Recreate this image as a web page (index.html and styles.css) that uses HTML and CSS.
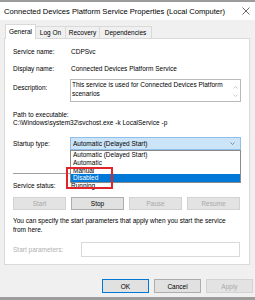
FILE: index.html
```html
<html>

<head>
    <link rel="stylesheet" href="styles.css">
</head>

<body>
    <div class="window">
        <div class="top-line"></div>
        <div class="title-bar">
            <span class="title">Connected Devices Platform Service Properties (Local Computer)</span>
            <svg class="close" width="8" height="8" viewBox="0 0 8 8">
                <path d="M0.5 0.5 L7.5 7.5 M7.5 0.5 L0.5 7.5" stroke="#444" stroke-width="0.8" fill="none" />
            </svg>
        </div>

        <div class="tabs">
            <div class="tab selected" style="width: 31px">General</div>
            <div class="tab" style="width: 31px">Log On</div>
            <div class="tab" style="width: 35px">Recovery</div>
            <div class="tab" style="width: 53px">Dependencies</div>
        </div>

        <div class="panel">
            <div class="row first">
                <div class="label">Service name:</div>
                <div class="value">CDPSvc</div>
            </div>
            <div class="row">
                <div class="label">Display name:</div>
                <div class="value">Connected Devices Platform Service</div>
            </div>
            <div class="row description">
                <div class="label">Description:</div>
                <div class="textarea">
                    <div class="textarea-text">This service is used for Connected Devices Platform<br>scenarios</div>
                    <div class="scroll">
                        <svg width="5" height="3" viewBox="0 0 5 3"><path d="M0.5 2.5 L2.5 0.5 L4.5 2.5" stroke="#b5b5b5" stroke-width="0.7" fill="none" /></svg>
                        <svg width="5" height="3" viewBox="0 0 5 3"><path d="M0.5 0.5 L2.5 2.5 L4.5 0.5" stroke="#b5b5b5" stroke-width="0.7" fill="none" /></svg>
                    </div>
                </div>
            </div>

            <div class="path-label">Path to executable:</div>
            <div class="path">C:\Windows\system32\svchost.exe -k LocalService -p</div>

            <div class="row startup">
                <div class="label">Startup type:</div>
                <div class="select-wrap">
                    <div class="select">
                        <span>Automatic (Delayed Start)</span>
                        <svg width="5" height="3" viewBox="0 0 5 3"><path d="M0.5 0.5 L2.5 2.5 L4.5 0.5" stroke="#666" stroke-width="0.7" fill="none" /></svg>
                    </div>
                    <div class="options">
                        <div class="option">Automatic (Delayed Start)</div>
                        <div class="option">Automatic</div>
                        <div class="option">Manual</div>
                        <div class="option active">Disabled</div>
                    </div>
                </div>
            </div>

            <div class="separator"></div>

            <div class="row status">
                <div class="label">Service status:</div>
                <div class="value">Running</div>
            </div>

            <div class="service-buttons">
                <button class="btn disabled">Start</button>
                <button class="btn">Stop</button>
                <button class="btn disabled">Pause</button>
                <button class="btn disabled">Resume</button>
            </div>

            <div class="hint">You can specify the start parameters that apply when you start the service<br>from here.</div>

            <div class="row params">
                <div class="label params-label">Start parameters:</div>
                <div class="input"></div>
            </div>
        </div>

        <div class="dialog-buttons">
            <button class="btn default">OK</button>
            <button class="btn">Cancel</button>
            <button class="btn disabled">Apply</button>
        </div>

        <div class="bottom-line"></div>

        <div class="highlight-box"></div>
    </div>
</body>

</html>
```

FILE: styles.css
```css
body {
    margin: 0;
    padding: 0;
    font-family: 'Liberation Sans', Arial, sans-serif;
    font-size: 6.5px;
    color: #000;
}

.window {
    position: relative;
    width: 255px;
    height: 300px;
    overflow: hidden;
    background-color: #f0f0f0;
}

.top-line {
    height: 2px;
    background-color: #9c9c9c;
}

.title-bar {
    height: 18px;
    background-color: #fff;
    display: flex;
    align-items: center;
    justify-content: space-between;
    padding: 0 5px 0 4px;
}

.title {
    font-size: 7.6px;
    white-space: nowrap;
}

.tabs {
    display: flex;
    align-items: flex-end;
    height: 14px;
    margin-top: 4px;
    padding-left: 5px;
}

.tab {
    box-sizing: border-box;
    height: 12px;
    line-height: 11px;
    text-align: center;
    border: 1px solid #d9d9d9;
    border-bottom: none;
    background-color: #f0f0f0;
    margin-left: -1px;
    white-space: nowrap;
}

.tab.selected {
    height: 15px;
    line-height: 13px;
    background-color: #fff;
    margin-left: 0;
    margin-bottom: -1px;
    position: relative;
    z-index: 1;
}

.panel {
    box-sizing: border-box;
    width: 246px;
    height: 227px;
    margin-left: 4px;
    padding: 6px 8px 0 8px;
    background-color: #fff;
    border: 1px solid #d9d9d9;
}

.row {
    display: flex;
    align-items: center;
    height: 13px;
    margin-top: 4px;
}

.row.first {
    margin-top: 0;
}

.label {
    width: 57px;
    flex: none;
    white-space: nowrap;
}

.value {
    padding-left: 1px;
    white-space: nowrap;
}

.row.description {
    height: 23px;
    align-items: flex-start;
}

.row.description .label {
    line-height: 10px;
    padding-top: 4px;
}

.textarea {
    flex: 1;
    box-sizing: border-box;
    height: 23px;
    border: 1px solid #b9b9b9;
    display: flex;
}

.textarea-text {
    flex: 1;
    padding-left: 1px;
    line-height: 9px;
    white-space: nowrap;
    overflow: hidden;
}

.scroll {
    width: 9px;
    display: flex;
    flex-direction: column;
    align-items: center;
    justify-content: space-between;
    padding: 6px 0 4px 0;
}

.path-label {
    margin-top: 9px;
    line-height: 8px;
}

.path {
    line-height: 8px;
    white-space: nowrap;
}

.row.startup {
    margin-top: 10px;
}

.select-wrap {
    flex: 1;
    position: relative;
    height: 13px;
}

.select {
    box-sizing: border-box;
    height: 13px;
    display: flex;
    align-items: center;
    justify-content: space-between;
    padding: 0 5px 0 2px;
    background-color: #cce4f7;
    border: 1px solid #8fbfe8;
}

.options {
    position: absolute;
    top: 13px;
    left: 0;
    right: 0;
    height: 33px;
    box-sizing: border-box;
    border: 1px solid #8a8a8a;
    background-color: #fff;
    z-index: 2;
}

.option {
    height: 7.75px;
    line-height: 7.75px;
    padding-left: 2px;
    white-space: nowrap;
}

.option.active {
    background-color: #0078d7;
    color: #fff;
}

.separator {
    height: 1px;
    margin-top: 23px;
    background-color: #a0a0a0;
}

.row.status {
    height: 10px;
    margin-top: 6px;
}

.service-buttons {
    display: flex;
    gap: 5px;
    margin-top: 7px;
}

.btn {
    box-sizing: border-box;
    width: 53px;
    height: 13px;
    padding: 0;
    font-family: inherit;
    font-size: 6.5px;
    color: #000;
    background-color: #e1e1e1;
    border: 1px solid #adadad;
}

.btn.disabled {
    color: #a8a8a8;
    background-color: #e3e3e3;
    border-color: #d2d2d2;
}

.hint {
    margin-top: 6px;
    line-height: 9px;
    white-space: nowrap;
}

.row.params {
    height: 15px;
    margin-top: 8px;
}

.params-label {
    width: 68px;
    color: #b0b0b0;
}

.input {
    flex: 1;
    box-sizing: border-box;
    height: 15px;
    margin-right: 1px;
    border: 1px solid #d9d9d9;
}

.dialog-buttons {
    display: flex;
    gap: 5px;
    margin-top: 14px;
    padding-left: 102px;
}

.dialog-buttons .btn {
    width: 47px;
    height: 14px;
}

.btn.default {
    border: 1px solid #0078d7;
}

.bottom-line {
    height: 3px;
    margin-top: 4px;
    background-color: #9c9c9c;
}

.highlight-box {
    position: absolute;
    left: 66px;
    top: 167px;
    width: 47px;
    height: 22px;
    box-sizing: border-box;
    border: 2px solid #e0242a;
    z-index: 3;
}
```
